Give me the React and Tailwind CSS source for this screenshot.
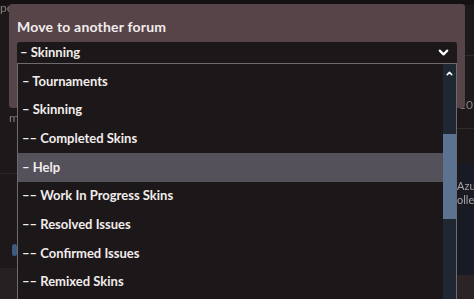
import { ChevronDown, ChevronUp } from "lucide-react";

const ITEMS = [
  { label: "– Tournaments" },
  { label: "– Skinning" },
  { label: "–– Completed Skins" },
  { label: "– Help", active: true },
  { label: "–– Work In Progress Skins" },
  { label: "–– Resolved Issues" },
  { label: "–– Confirmed Issues" },
  { label: "–– Remixed Skins" },
];

export default function App() {
  return (
    <div
      className="relative w-[474px] h-[299px] overflow-hidden bg-[#1d1819] text-[#f2ecec]"
      style={{ fontFamily: "Lato, 'Noto Sans', sans-serif" }}
    >
      {/* page behind the dialog */}
      <div className="flex flex-col h-full">
        <div className="h-[5px] bg-[#151112]" />
        <div className="flex flex-1 justify-between">
          <div className="w-[17px] flex flex-col text-[12px] text-[#857c7e] blur-[0.5px]">
            <span className="leading-[10px] -mt-[2px]">pe</span>
            <span className="mt-[98px] pl-[9px] leading-[14px]">m</span>
            <div className="mt-[48px] h-px bg-[#2c2628]" />
            <div className="mt-[70px] ml-[12px] w-[5px] h-[12px] rounded-full bg-[#3a5a80]" />
            <div className="mt-auto h-[31px] bg-[#262022]" />
          </div>
          <div className="w-[17px] flex flex-col text-[12px] text-[#8a8284]">
            <div className="mt-[50px] h-px bg-[#2f2a2b]" />
            <span className="mt-[42px] pl-[2px] leading-[14px] blur-[0.3px]">10</span>
            <div className="mt-[16px] h-px bg-[#2f2a2b]" />
            <div className="mt-[34px] h-[112px] bg-[#191b24] pt-[16px] text-[11px] leading-[14px] text-[#a9a4a8] whitespace-nowrap overflow-hidden">
              <div className="blur-[0.3px]">Azu</div>
              <div className="blur-[0.3px]">olle</div>
            </div>
            <div className="flex-1 bg-[#2b2325]" />
          </div>
        </div>
      </div>

      {/* dialog */}
      <div className="absolute left-[9px] top-[4px] w-[456px] h-[104px] rounded-[3px] bg-[#574449] px-[8px] pt-[13px]">
        <h2 className="text-[14px] leading-[20px] font-bold tracking-[0.2px]">Move to another forum</h2>
        <div className="relative mt-[5px] w-[440px]">
          <div className="flex h-[21px] items-center justify-between rounded-t-[3px] bg-[#1c1718] pl-[3px] pr-[6px]">
            <span className="text-[13px] font-bold">– Skinning</span>
            <ChevronDown size={15} strokeWidth={3.5} className="text-white" />
          </div>
          {/* open listbox */}
          <div className="absolute left-0 top-[21px] w-[440px] h-[260px] border border-[#6f6a6b] bg-[#1c1819] flex">
            <div className="flex-1 pt-[3px]">
              {ITEMS.map((it) => (
                <div
                  key={it.label}
                  className={`flex h-[28.7px] items-center pl-[4px] text-[13px] font-bold ${
                    it.active ? "bg-[#54515a]" : ""
                  }`}
                >
                  {it.label}
                </div>
              ))}
            </div>
            <div className="w-[13px] flex flex-col bg-[#1f2732]">
              <div className="flex h-[16px] items-center justify-center pt-[3px]">
                <ChevronUp size={9} strokeWidth={4} className="text-white" />
              </div>
              <div className="mt-[54px] h-[85px] bg-[#5b7391]" />
            </div>
          </div>
        </div>
      </div>
    </div>
  );
}
